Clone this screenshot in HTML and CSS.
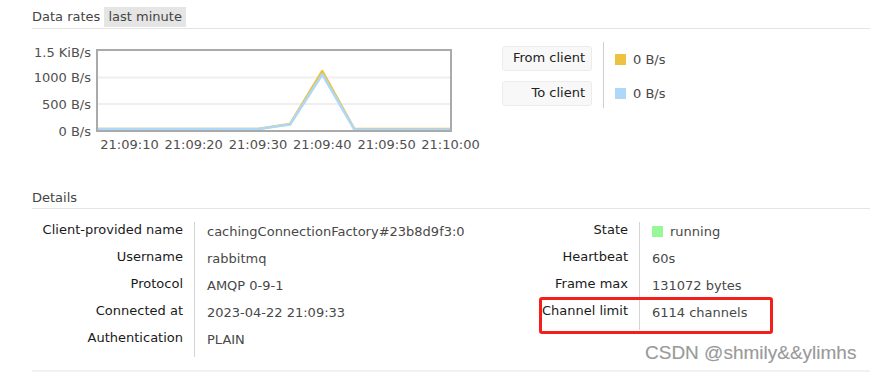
FILE: index.html
```html
<!DOCTYPE html>
<html>
<head>
<meta charset="utf-8">
<link rel="stylesheet" href="styles.css">
</head>
<body>
<div class="page">
  <section class="section">
    <h2 class="section-head">Data rates <span class="range">last minute</span></h2>
    <div class="rates">
      <svg class="chart" width="460" height="115" viewBox="0 0 460 115">
        <g transform="translate(-32 -40)">
          <rect x="97" y="50" width="354" height="81" fill="#fff"/>
          <line x1="98" y1="77.5" x2="450" y2="77.5" stroke="#efefef" stroke-width="2"/>
          <line x1="98" y1="104" x2="450" y2="104" stroke="#efefef" stroke-width="2"/>
          <polyline fill="none" stroke="#edc240" stroke-width="2.5" stroke-linejoin="round"
            points="97,129 129.2,129 161.4,129 193.5,129 225.7,129 257.9,129 290.1,124 322.3,71 354.4,129 386.6,129 418.8,129 451,129"/>
          <polyline fill="none" stroke="#afd8f8" stroke-width="2.5" stroke-linejoin="round"
            points="97,129 129.2,129 161.4,129 193.5,129 225.7,129 257.9,129 290.1,124.5 322.3,74.5 354.4,129.5 386.6,129.5 418.8,129.5 451,129.5"/>
          <rect x="97" y="50" width="354" height="81" fill="none" stroke="#aaa" stroke-width="2"/>
          <g class="axis-y" text-anchor="end">
            <text x="91" y="57">1.5 KiB/s</text>
            <text x="91" y="82">1000 B/s</text>
            <text x="91" y="109">500 B/s</text>
            <text x="91" y="136">0 B/s</text>
          </g>
          <g class="axis-x" text-anchor="middle">
            <text x="129.5" y="149">21:09:10</text>
            <text x="193.7" y="149">21:09:20</text>
            <text x="258" y="149">21:09:30</text>
            <text x="322.3" y="149">21:09:40</text>
            <text x="386.6" y="149">21:09:50</text>
            <text x="450.5" y="149">21:10:00</text>
          </g>
        </g>
      </svg>
      <div class="series-buttons">
        <div class="series-btn">From client</div>
        <div class="series-btn">To client</div>
      </div>
      <div class="legend">
        <div class="legend-item"><span class="swatch swatch-from"></span>0 B/s</div>
        <div class="legend-item"><span class="swatch swatch-to"></span>0 B/s</div>
      </div>
    </div>
  </section>

  <section class="section details-section">
    <h2 class="section-head details-head">Details</h2>
    <div class="details">
      <table class="facts facts-left">
        <tr><th>Client-provided name</th><td>cachingConnectionFactory#23b8d9f3:0</td></tr>
        <tr><th>Username</th><td>rabbitmq</td></tr>
        <tr><th>Protocol</th><td>AMQP 0-9-1</td></tr>
        <tr><th>Connected at</th><td>2023-04-22 21:09:33</td></tr>
        <tr><th>Authentication</th><td>PLAIN</td></tr>
      </table>
      <table class="facts facts-right">
        <tr><th>State</th><td><span class="state-swatch"></span>running</td></tr>
        <tr><th>Heartbeat</th><td>60s</td></tr>
        <tr><th>Frame max</th><td>131072 bytes</td></tr>
        <tr><th>Channel limit</th><td>6114 channels</td></tr>
      </table>
      <div class="highlight"></div>
    </div>
  </section>
  <div class="bottom-line"></div>
  <div class="watermark">CSDN @shmily&amp;&amp;ylimhs</div>
</div>
</body>
</html>
```

FILE: styles.css
```css
html, body {
  margin: 0;
  padding: 0;
  background: #fff;
}

body {
  font-family: "DejaVu Sans", Verdana, sans-serif;
  font-size: 13px;
  color: #484848;
}

.page {
  position: relative;
  width: 870px;
  height: 374px;
  padding-left: 32px;
  box-sizing: border-box;
  overflow: hidden;
}

.section-head {
  margin: 7px 0 0;
  font-size: 13px;
  font-weight: normal;
  line-height: 20px;
  color: #444;
  padding-bottom: 1px;
  border-bottom: 1px solid #e4e4e4;
}

.range {
  background: #e5e5e5;
  padding: 0 4px;
  display: inline-block;
  line-height: 20px;
}

.rates {
  display: flex;
  align-items: flex-start;
  margin-top: 11px;
}

.chart {
  display: block;
  flex: 0 0 460px;
}

.chart text {
  font-family: "DejaVu Sans", Verdana, sans-serif;
  font-size: 13px;
  fill: #505050;
}

.series-buttons {
  display: flex;
  flex-direction: column;
  gap: 10px;
  margin-top: 6px;
  margin-left: 10px;
  width: 90px;
}

.series-btn {
  height: 25px;
  box-sizing: border-box;
  border: 1px solid #ececec;
  border-radius: 3px;
  background: #f8f8f8;
  text-align: right;
  padding-right: 6px;
  line-height: 22px;
  color: #222;
}

.legend {
  margin-left: 11px;
  margin-top: 2px;
  height: 66px;
  border-left: 1px solid #cfcfcf;
  padding-left: 11px;
  padding-top: 0;
  box-sizing: border-box;
}

.legend-item {
  height: 34px;
  display: flex;
  align-items: center;
  color: #484848;
}

.swatch {
  width: 11px;
  height: 11px;
  margin-right: 7px;
  display: inline-block;
}

.swatch-from { background: #edc240; }
.swatch-to { background: #afd8f8; }

.details-head {
  margin-top: 33px;
  padding-bottom: 0;
}

.details {
  position: relative;
  display: flex;
  align-items: flex-start;
  margin-top: 13px;
}

.facts {
  border-collapse: collapse;
}

.facts th {
  font-weight: normal;
  text-align: right;
  color: #1a1a1a;
  line-height: 15px;
  padding: 0 11px 12px 0;
  vertical-align: top;
  white-space: nowrap;
}

.facts td {
  line-height: 15px;
  padding: 2px 0 10px 12px;
  border-left: 1px solid #d4d4d4;
  vertical-align: top;
  white-space: nowrap;
  color: #484848;
}

.facts-left {
  width: 480px;
}

.facts-left th {
  width: 151px;
}

.facts-right th {
  width: 116px;
}

.state-swatch {
  display: inline-block;
  width: 11px;
  height: 11px;
  background: #98f898;
  margin-right: 7px;
  vertical-align: -1px;
}

.highlight {
  position: absolute;
  left: 507px;
  top: 75px;
  width: 234px;
  height: 37px;
  box-sizing: border-box;
  border: 3px solid #f3201a;
  border-radius: 3px;
}

.bottom-line {
  margin-top: 13px;
  height: 2px;
  background: #f2f2f2;
}

.watermark {
  position: absolute;
  left: 645px;
  top: 342px;
  font-family: "Liberation Sans", Arial, sans-serif;
  font-size: 19px;
  color: #9a9a9a;
  text-shadow: 0 0 1px #e0e0e0;
  white-space: nowrap;
}
```
